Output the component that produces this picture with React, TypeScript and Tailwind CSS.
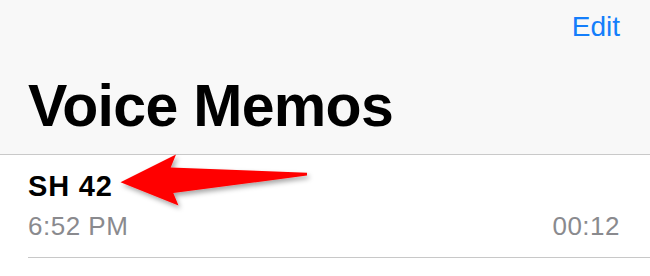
const FONT = { fontFamily: '"Liberation Sans", Arial, sans-serif' };

function Arrow() {
  return (
    <svg
      className="pointer-events-none absolute left-0 top-0"
      width="650"
      height="276"
      viewBox="0 0 650 276"
    >
      <defs>
        <filter id="shadow" x="-20%" y="-50%" width="140%" height="200%">
          <feDropShadow dx="2" dy="3" stdDeviation="2.5" floodColor="#000" floodOpacity="0.35" />
        </filter>
      </defs>
      <polygon
        points="120.5,182.3 176,154.5 170.7,167.5 307,172.8 307,175.5 173.3,193 178.5,205.5"
        fill="#ff0000"
        filter="url(#shadow)"
      />
    </svg>
  );
}

export default function App() {
  return (
    <main className="relative h-[276px] w-[650px] overflow-hidden bg-white" style={FONT}>
      <header className="flex h-[155px] flex-col border-b border-[#c9c9c9] bg-[#f8f8f8]">
        <div className="flex justify-end pr-[30px] pt-[10px]">
          <button className="text-[28px] leading-[34px] text-[#147efb]">Edit</button>
        </div>
        <h1 className="mt-[30px] pl-[28px] text-[59px] font-bold leading-[64px] tracking-[-0.7px] text-black">
          Voice Memos
        </h1>
      </header>

      <div className="ml-[28px] flex flex-col border-b border-[#c8c8c8] pb-[15px] pr-[30px] pt-[14px]">
        <p className="text-[29px] font-bold leading-[34px] tracking-[0.8px] text-black">SH 42</p>
        <div className="mt-[7px] flex justify-between text-[26px] leading-[32px] tracking-[0.5px] text-[#8a8a8e]">
          <span>6:52 PM</span>
          <span>00:12</span>
        </div>
      </div>

      <Arrow />
    </main>
  );
}
